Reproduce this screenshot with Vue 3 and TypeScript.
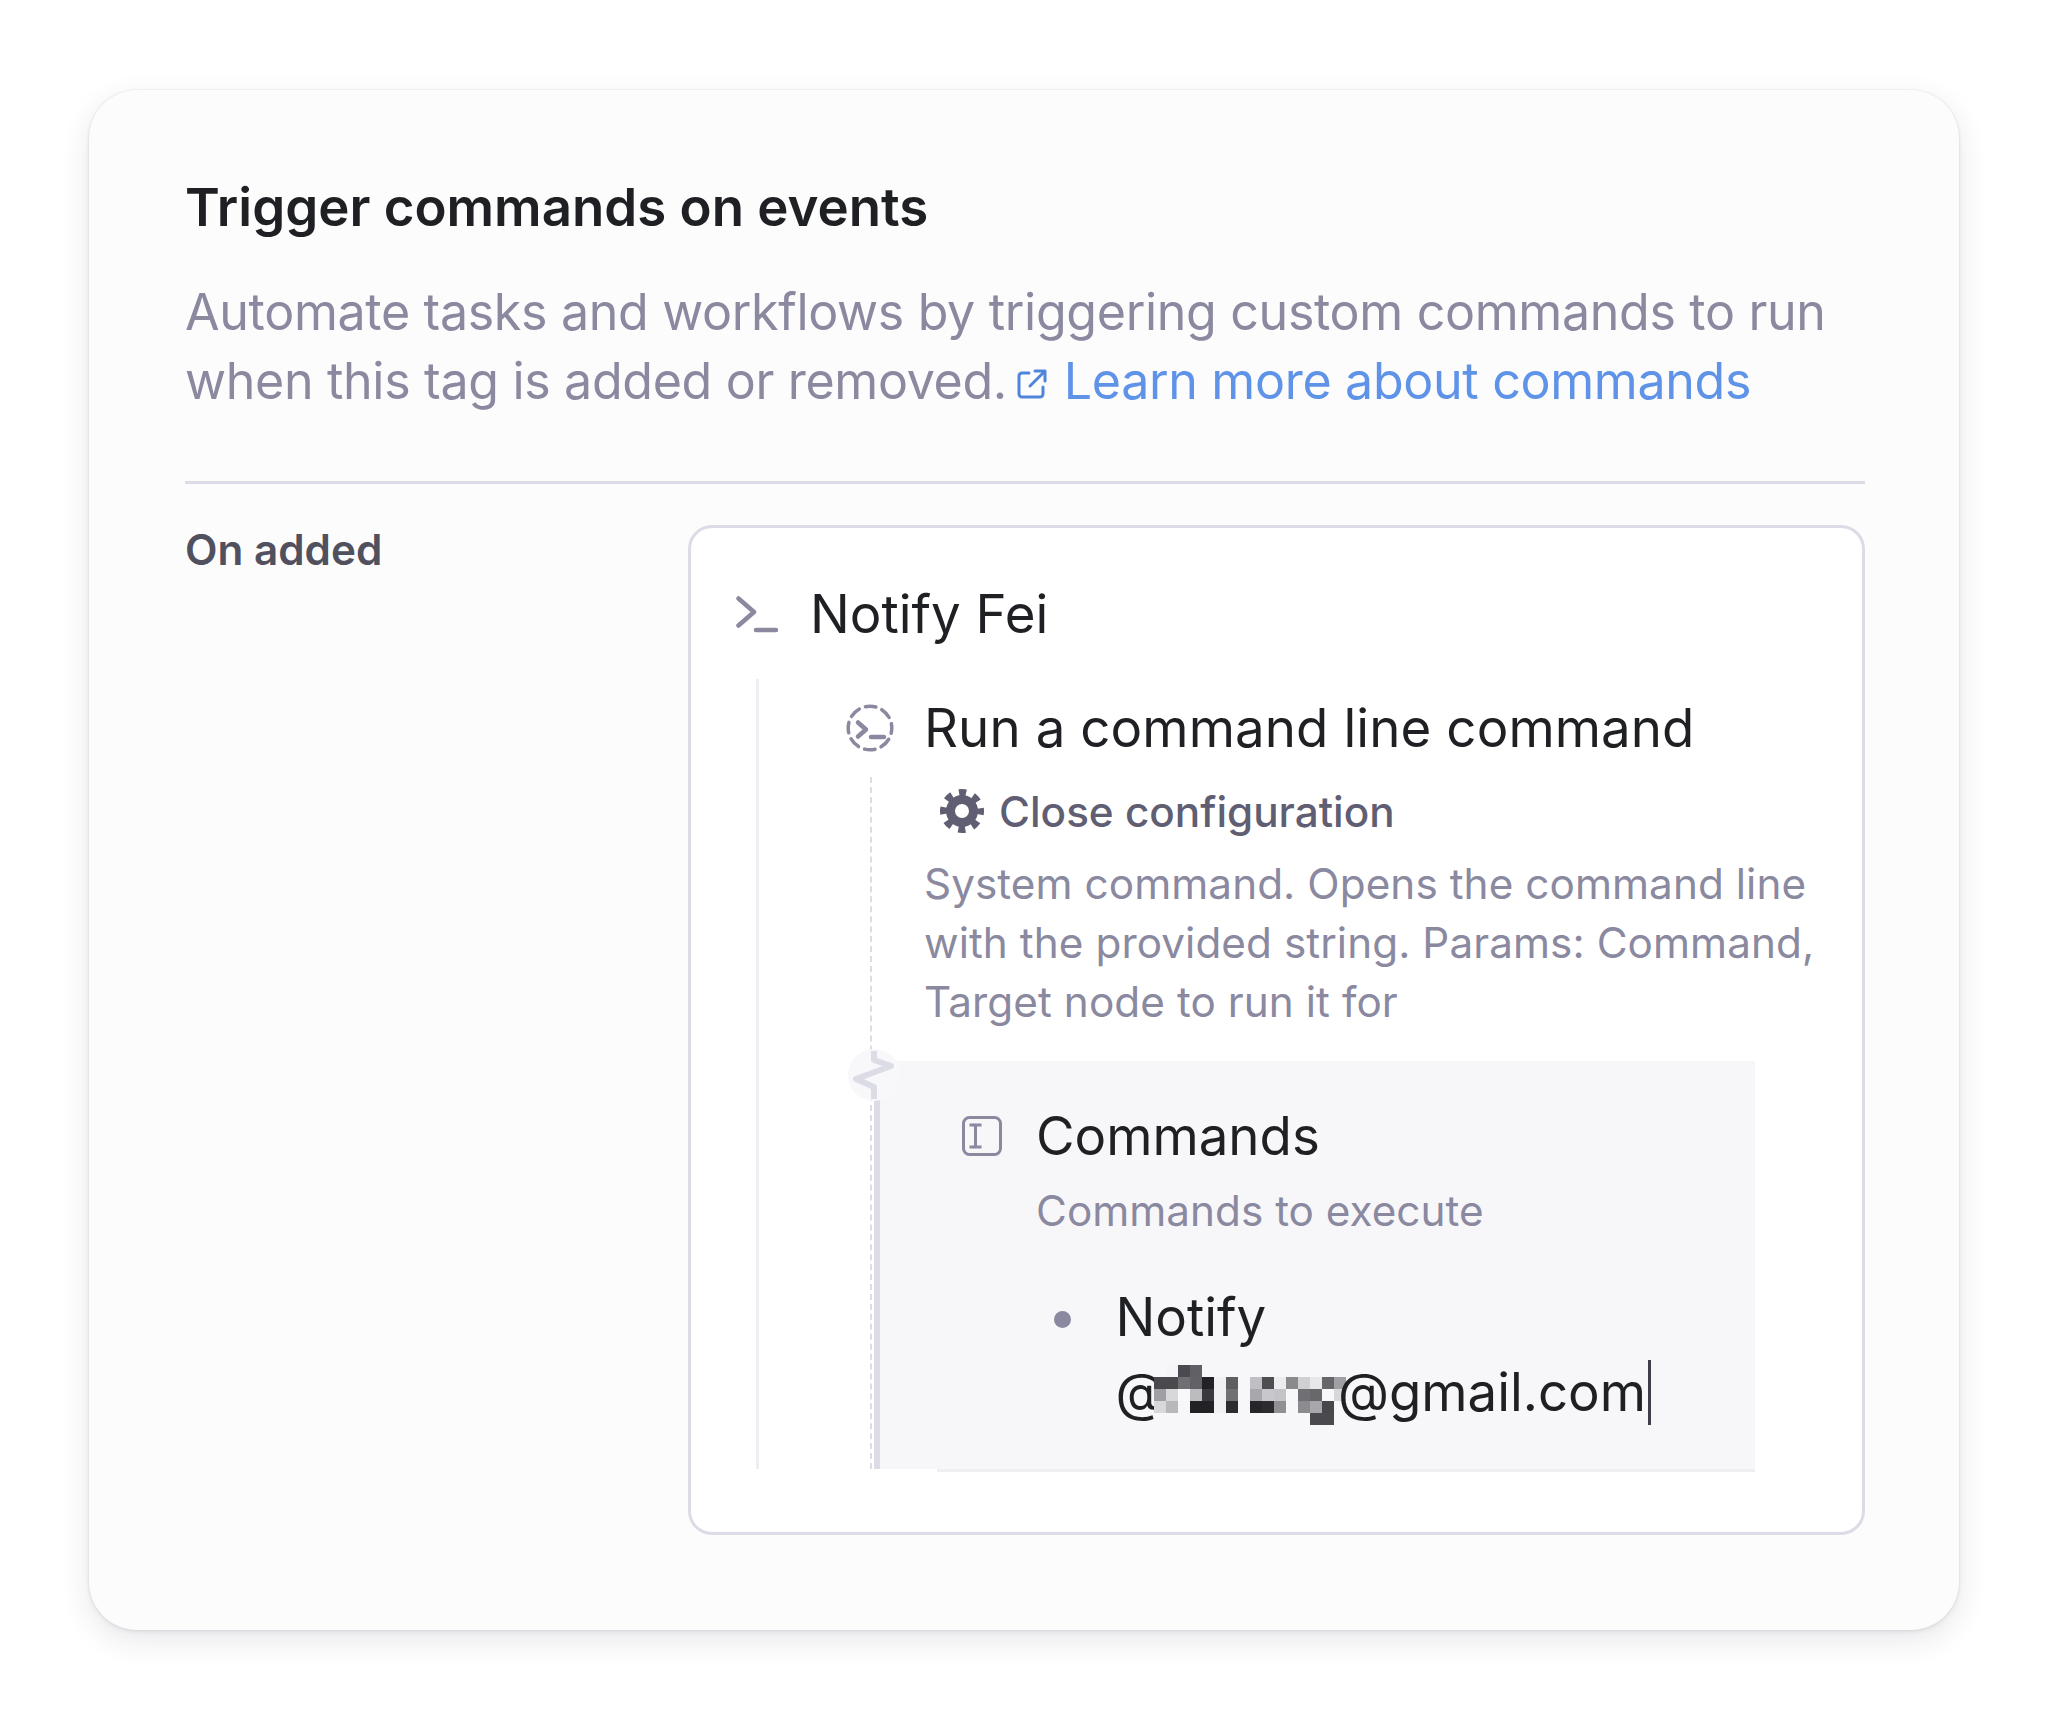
<template>
  <div class="page">
    <section class="card">
      <h2 class="title">Trigger commands on events</h2>
      <p class="lead">
        Automate tasks and workflows by triggering custom commands to run when this tag is added or removed.
        <a class="link" href="#">
          <svg class="link-icon" viewBox="0 0 32 32" width="32" height="32" fill="none">
            <path d="M13 5H6a3 3 0 0 0-3 3v18a3 3 0 0 0 3 3h18a3 3 0 0 0 3-3v-7" />
            <path d="M14 18 28 4M19 3h10v10" />
          </svg>Learn more about commands</a>
      </p>
      <div class="divider"></div>

      <div class="event">
        <div class="event-label">On added</div>
        <div class="box">
          <div class="cmd-head">
            <svg class="cmd-icon" viewBox="0 0 44 44" width="44" height="44" fill="none">
              <path d="M3.5 6.5 19 20 3.5 33.5M21 38h20" />
            </svg>
            <span class="cmd-name">Notify Fei</span>
          </div>

          <div class="tree">
            <div class="step-head">
              <svg class="step-icon" viewBox="0 0 50 50" width="50" height="50" fill="none">
                <circle class="ring" cx="25" cy="25" r="21.8" />
                <path class="ring-in" d="M13 19.5l8 7-8 7M26 34h13" />
              </svg>
              <span class="step-name">Run a command line command</span>
            </div>

            <div class="step-body">
              <div class="config">
                <div class="config-toggle">
                  <svg class="gear" viewBox="0 0 44 44" width="44" height="44" fill="none">
                    <circle class="gear-ring" cx="22" cy="22" r="11.5" />
                    <circle class="gear-teeth" cx="22" cy="22" r="18" />
                  </svg>
                  <span>Close configuration</span>
                </div>
                <p class="step-desc">System command. Opens the command line with the provided string. Params: Command, Target node to run it for</p>
              </div>

              <div class="panel">
                <svg class="squiggle" viewBox="0 0 60 60" width="60" height="60" fill="none">
                  <circle cx="30" cy="30" r="26" fill="#f8f8fa" />
                  <path d="M30 6v9l17 6-35 13 18 8v12" />
                </svg>
                <div class="param-head">
                  <svg class="param-icon" viewBox="0 0 40 40" width="40" height="40" fill="none">
                    <rect x="1.5" y="1.5" width="37" height="37" rx="6" />
                    <path d="M7.5 9h12M7.5 31h12M13.5 9v22" />
                  </svg>
                  <span class="param-name">Commands</span>
                </div>
                <div class="param-desc">Commands to execute</div>
                <div class="bullet-row">
                  <span class="bullet"></span>
                  <div class="bullet-text">Notify<br />@<svg class="blur" viewBox="0 0 192 60" width="192" height="60" shape-rendering="crispEdges">
                      <rect
                        v-for="c in blurCells"
                        :key="c.key"
                        :x="c.x"
                        :y="c.y"
                        width="12"
                        height="12"
                        :fill="c.fill"
                      />
                    </svg>@gmail.com<span class="caret"></span></div>
                </div>
              </div>
            </div>
          </div>
        </div>
      </div>
    </section>
  </div>
</template>

<script setup lang="ts">
// mosaic over the redacted part of the address, '' = no cell
const blurRows: string[][] = [
  ['', 'f5f5f7', '4a4a50', '606065'],
  ['4a4a4e', '4a4a4e', '707074', '626266', '222226', 'f0f0f2', '5e5e62', '', 'c0c0c4', '4e4e52', 'ececee', '8a8a8e', 'd0d0d2', 'e8e8ea', '66666a', 'a0a0a4'],
  ['a0a0a4', 'd8d8da', 'f8f8fa', 'bcbcc0', '3a3a3e', 'f0f0f2', '707074', '', 'a8a8ac', 'c8c8cc', 'c4c4c8', '', '707074', '68686c', 'f8f8fa', 'd8d8da'],
  ['d8d8da', 'b8b8bc', '', '222226', '222226', 'f0f0f2', '2c2c30', '', '26262a', '2c2c30', '909094', '', '8c8c90', 'a8a8ac', '48484c'],
  ['', '', '', '', '', '', '', '', '', '', '', '', '', '4a4a4e', '4a4a4e']
];

const blurCells = blurRows.flatMap((row, y) =>
  row
    .map((hex, x) => ({ key: `${x}-${y}`, x: x * 12, y: y * 12, fill: `#${hex}`, hex }))
    .filter((c) => c.hex !== '')
);
</script>

<style>
html,
body {
  margin: 0;
  background: #fff;
}
</style>

<style scoped>
.page {
  box-sizing: border-box;
  width: 2048px;
  height: 1718px;
  padding: 90px 89px 0;
  font-family: Inter, "Liberation Sans", sans-serif;
}
.card {
  box-sizing: border-box;
  width: 1870px;
  height: 1540px;
  padding: 77px 94px 0 96px;
  background: #fcfcfd;
  border-radius: 48px;
  box-shadow: 0 0 2px rgba(40, 40, 60, 0.12), 0 2px 4px rgba(40, 40, 60, 0.07), 0 10px 30px rgba(40, 40, 60, 0.11);
}
.title {
  margin: 0;
  font-size: 52.8px;
  line-height: 80px;
  font-weight: 600;
  color: #1f2024;
}
.lead {
  margin: 30px 0 0;
  font-size: 50.16px;
  line-height: 69px;
  letter-spacing: -0.34px;
  color: #8a89a0;
}
.link {
  color: #5f93e8;
  text-decoration: none;
}
.link-icon {
  margin: 0 16px 0 -5px;
  vertical-align: -1px;
  stroke: #4f86d9;
  stroke-width: 3;
  stroke-linecap: round;
  stroke-linejoin: round;
}
.divider {
  height: 3px;
  margin-top: 66px;
  background: #dcdce6;
}
.event {
  display: flex;
  margin-top: 41px;
}
.event-label {
  flex: none;
  width: 503px;
  font-size: 42.24px;
  line-height: 50px;
  font-weight: 600;
  color: #50505f;
}
.box {
  box-sizing: border-box;
  width: 1177px;
  height: 1010px;
  padding-top: 41px;
  background: #fff;
  border: 3px solid #dcdce6;
  border-radius: 24px;
}
.cmd-head {
  display: flex;
  align-items: center;
  gap: 31px;
  height: 90px;
  margin-bottom: 20px;
  padding-left: 44px;
}
.cmd-icon {
  flex: none;
  stroke: #8a89a0;
  stroke-width: 4.5;
  stroke-linecap: round;
  stroke-linejoin: round;
}
.cmd-name,
.step-name,
.param-name {
  font-size: 52.8px;
  color: #1f2024;
}
.step-name {
  letter-spacing: 0.1px;
}
.tree {
  margin-left: 65px;
  border-left: 3px solid #ededf3;
}
.step-head {
  display: flex;
  align-items: center;
  gap: 29px;
  height: 98px;
  padding-left: 86px;
}
.step-icon {
  flex: none;
}
.ring {
  stroke: #8a89a0;
  stroke-width: 3.5;
  stroke-dasharray: 10.7 6.42;
  stroke-dashoffset: 5.35;
  stroke-linecap: round;
}
.ring-in {
  stroke: #8a89a0;
  stroke-width: 4.5;
  stroke-linecap: round;
  stroke-linejoin: round;
}
.step-body {
  box-sizing: border-box;
  margin-left: 111px;
  border-left: 2px dashed #dcdce6;
  margin-right: 107px;
}
.config {
  padding: 13px 0 0 52px;
  margin-right: -107px;
}
.config-toggle {
  display: flex;
  align-items: center;
  gap: 15px;
  height: 42px;
  padding: 0 0 0 16px;
  font-size: 42.24px;
  font-weight: 500;
  color: #5f5e72;
}
.gear {
  flex: none;
}
.gear-ring {
  stroke: #5f5e72;
  stroke-width: 9;
}
.gear-teeth {
  stroke: #5f5e72;
  stroke-width: 8;
  stroke-dasharray: 7 7.14;
  stroke-dashoffset: 3.5;
}
.step-desc {
  margin: 22px 0 0;
  font-size: 42.24px;
  line-height: 59px;
  letter-spacing: 0.08px;
  color: #8a89a0;
}
.panel {
  position: relative;
  box-sizing: border-box;
  height: 408px;
  margin: 30px 0 0 2px;
  padding: 35px 0 0 82px;
  background: #f7f7fa;
  border-left: 6px solid #dcdce6;
}
.panel::after {
  content: "";
  position: absolute;
  left: 57px;
  right: 0;
  bottom: -3px;
  height: 3px;
  background: #eeeef3;
}
.squiggle {
  position: absolute;
  top: -16px;
  left: -36px;
}
.squiggle path {
  stroke: #dcdce6;
  stroke-width: 6;
  stroke-linejoin: round;
}
.param-head {
  display: flex;
  align-items: center;
  gap: 34px;
  height: 80px;
}
.param-icon {
  flex: none;
}
.param-icon rect {
  stroke: #8a89a0;
  stroke-width: 3;
}
.param-icon path {
  stroke: #8a89a0;
  stroke-width: 3;
}
.param-desc {
  margin: 5px 0 0 74px;
  font-size: 42.24px;
  line-height: 60px;
  letter-spacing: 0.03px;
  color: #8a89a0;
}
.bullet-row {
  display: flex;
  align-items: flex-start;
  margin: 39px 0 0 92px;
}
.bullet {
  flex: none;
  width: 17px;
  height: 17px;
  margin-top: 31px;
  border-radius: 50%;
  background: #8a89a0;
}
.bullet-text {
  margin-left: 44.5px;
  font-size: 52.8px;
  line-height: 75px;
  color: #1f2024;
}
.blur {
  margin: 0 -7.6px 0 -13px;
  vertical-align: -14px;
}
.caret {
  display: inline-block;
  width: 3px;
  height: 65px;
  margin-left: 2px;
  vertical-align: -14px;
  background: #3f3f4a;
}
</style>
